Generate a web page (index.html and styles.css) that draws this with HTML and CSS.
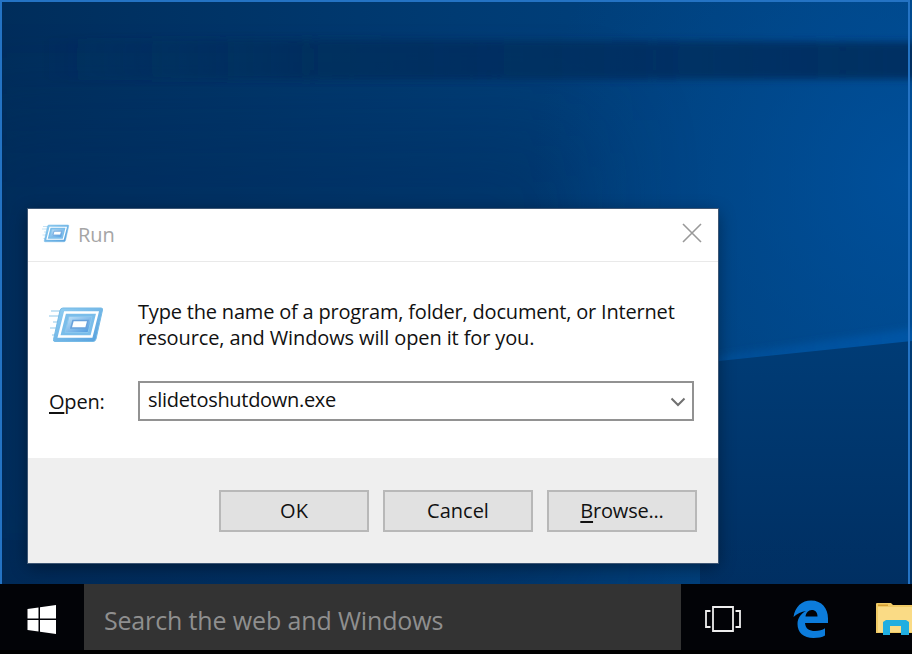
FILE: index.html
```html
<!DOCTYPE html>
<html lang="en">
<head>
    <meta charset="UTF-8">
    <meta name="viewport" content="width=device-width, initial-scale=1.0">
    <title>Run</title>
    <link rel="stylesheet" href="styles.css">
</head>
<body>
    <svg width="0" height="0" class="defs">
        <defs>
            <linearGradient id="azul" x1="0" y1="0" x2="1" y2="1">
                <stop offset="0" stop-color="#93d0f3"/>
                <stop offset="1" stop-color="#559fdc"/>
            </linearGradient>
            <linearGradient id="inner" x1="0" y1="0" x2="1" y2="1">
                <stop offset="0" stop-color="#c3e3f8"/>
                <stop offset="1" stop-color="#4a97de"/>
            </linearGradient>
            <symbol id="run-icon" viewBox="0 0 56 42">
                <path d="M2 7h12M0 12h12M4 18h7M1 24h9M3 31h5" stroke="#b5daf1" stroke-width="1.6"/>
                <path d="M14 4h38q2 0 1.500 2l-6.500 29q-.6 2.500-3 2.500H6q-2 0-1.500-2L11 6.500Q11.600 4 14 4z" fill="url(#azul)" stroke="#76bae6"/>
                <path d="M16 8.500H48.500L42.500 32.500H10z" fill="#7abdea" stroke="#fff" stroke-width="2.400"/>
                <path d="M20 12.500H43L39 28.500H16z" fill="url(#inner)" stroke="#8ac6ee" stroke-width="1"/>
                <path d="M24 16.500H39l-2 7.500H22z" fill="#fff" stroke="#6aa2dc" stroke-width="1.600"/>
            </symbol>
        </defs>
    </svg>

    <div class="desktop">
        <svg class="wallpaper" viewBox="0 0 912 584" preserveAspectRatio="none">
            <defs>
                <linearGradient id="base" x1="0" y1="0" x2="1" y2="0">
                    <stop offset="0" stop-color="#002d5b"/>
                    <stop offset=".5" stop-color="#003b73"/>
                    <stop offset="1" stop-color="#004788"/>
                </linearGradient>
                <radialGradient id="glow" gradientUnits="userSpaceOnUse" cx="912" cy="180" r="380">
                    <stop offset="0" stop-color="#0052a0" stop-opacity=".8"/>
                    <stop offset="1" stop-color="#004a91" stop-opacity="0"/>
                </radialGradient>
                <linearGradient id="band" x1="0" y1="0" x2="1" y2="0">
                    <stop offset="0" stop-color="#002a57" stop-opacity="0"/>
                    <stop offset=".3" stop-color="#002a57" stop-opacity=".6"/>
                    <stop offset="1" stop-color="#002f62"/>
                </linearGradient>
                <linearGradient id="floor" x1="0" y1="0" x2="0" y2="1">
                    <stop offset="0" stop-color="#003c76"/>
                    <stop offset="1" stop-color="#002f62"/>
                </linearGradient>
                <linearGradient id="bottom" x1="0" y1="0" x2="1" y2="0">
                    <stop offset="0" stop-color="#002855"/>
                    <stop offset="1" stop-color="#003063" stop-opacity="0"/>
                </linearGradient>
                <linearGradient id="ray" x1="0" y1="0" x2="1" y2="0">
                    <stop offset="0" stop-color="#0056a8" stop-opacity=".2"/>
                    <stop offset="1" stop-color="#0058ab" stop-opacity=".8"/>
                </linearGradient>
                <filter id="soft" x="-10%" y="-20%" width="120%" height="140%"><feGaussianBlur stdDeviation="3.500"/></filter>
                <filter id="blur" x="-20%" y="-20%" width="140%" height="140%"><feGaussianBlur stdDeviation="50"/></filter>
            </defs>
            <rect width="912" height="584" fill="url(#base)"/>
            <path d="M-60 120H600L560 600H-60z" fill="#002c5b" opacity=".4" filter="url(#blur)"/>
            <rect width="912" height="584" fill="url(#glow)"/>
            <path d="M40 38 940 42V79L40 80z" fill="url(#band)" filter="url(#soft)"/>
            <path d="M600 372 930 326V346L600 384z" fill="url(#ray)" filter="url(#soft)"/>
            <path d="M700 363 912 341V584H700z" fill="url(#floor)"/>
            <path d="M0 540H912V584H0z" fill="url(#bottom)" opacity=".7"/>
        </svg>

        <div class="window">
            <div class="titlebar">
                <svg class="title-icon"><use href="#run-icon"/></svg>
                <span class="title">Run</span>
                <svg class="close" viewBox="0 0 20 20"><path d="M1 1l18 18M19 1L1 19"/></svg>
            </div>
            <div class="content">
                <svg class="big-icon"><use href="#run-icon"/></svg>
                <p class="message"><span class="line1">Type the name of a program, folder, document, or Internet</span><br><span class="line2">resource, and Windows will open it for you.</span></p>
                <label class="open-label" for="open"><u>O</u>pen:</label>
                <div class="combo">
                    <span id="open">slidetoshutdown.exe</span>
                    <svg class="arrow" viewBox="0 0 16 10"><path d="M1.500 1.500 8 8l6.500-6.500"/></svg>
                </div>
            </div>
            <div class="buttons">
                <button>OK</button>
                <button>Cancel</button>
                <button class="browse"><u>B</u>rowse...</button>
            </div>
        </div>
    </div>

    <div class="taskbar">
        <div class="start">
            <svg width="30" height="30" viewBox="0 0 30 30" fill="#fff">
                <path d="M.5 4 11.500 2.500V13.500H.5zM13 2.300 29 0V13.500H13zM.5 15H11.500V26.500L.5 25zM13 15H29V29L13 26.700z"/>
            </svg>
        </div>
        <div class="search"><span>Search the web and Windows</span></div>
        <div class="apps">
            <svg class="taskview" viewBox="0 0 36 26" fill="none" stroke="#eee" stroke-width="1.800">
                <path d="M8 1H28V25H8zM5.500 5H1V21H5.500M30.500 5H35V21H30.500"/>
            </svg>
            <svg class="edge" viewBox="0 0 36 38">
                <path fill="#0c7cdb" d="M.5 17C2 6.500 9 .5 18 .5 29 .5 35 8.500 35 18.500V23H12C12.500 29 16.500 31 22 31 26 31 29.500 30 32 28.300V35.500C29 37.300 25 38 20.500 38 10.500 38 4.500 32.500 4.500 24 4.500 18 8 13.500 13 11 8.500 11.500 4 13.500.5 17zM12.500 16.500H24.500C24.500 12.500 22.500 10 18.800 10 15.200 10 13 13 12.500 16.500z"/>
            </svg>
            <svg class="folder" viewBox="0 0 36 34">
                <path d="M0 2Q0 1 1 1H15L17 3H36V31H0z" fill="#f0ca65"/>
                <path d="M2 5H36V30H2z" fill="#fadb85"/>
                <path d="M2 2.500H12V4H2z" fill="#d69f32"/>
                <path d="M7 33V20L10 18H30L33 20V33H25V24H14V33z" fill="#21aee0"/>
            </svg>
        </div>
    </div>
</body>
</html>
```

FILE: styles.css
```css
body {
    margin: 0;
    width: 912px;
    height: 654px;
    overflow: hidden;
    background: #000;
    font-family: "Open Sans", "Noto Sans", sans-serif;
    font-size: 20px;
    color: #111;
}

.defs {
    position: absolute;
}

.desktop {
    position: relative;
    height: 584px;
    overflow: hidden;
}

.desktop::after {
    content: "";
    position: absolute;
    top: 0;
    left: 0;
    right: 2px;
    bottom: 0;
    border: 2px solid #2473c4;
    border-bottom: none;
}

.wallpaper {
    display: block;
    width: 912px;
    height: 584px;
}

.window {
    position: absolute;
    left: 28px;
    top: 209px;
    width: 690px;
    height: 354px;
    display: flex;
    flex-direction: column;
    background: #fff;
    outline: 1px solid #3d5674;
    box-shadow: 0 4px 16px rgba(0, 0, 0, 0.4);
}

.titlebar {
    display: flex;
    align-items: center;
    height: 53px;
    padding: 0 16px 1px 14px;
    box-sizing: border-box;
    border-bottom: 1px solid #e9e9e9;
}

.title-icon {
    width: 28px;
    height: 21px;
    margin-top: -2px;
}

.title {
    flex: 1;
    margin-left: 8px;
    color: #a5a5a5;
}

.close {
    width: 20px;
    height: 20px;
    margin-top: -3px;
    stroke: #999;
    stroke-width: 1.6;
}

.content {
    display: grid;
    grid-template-columns: 89px 556px;
    grid-template-rows: 82px 40px;
    padding: 37px 0 37px 21px;
}

.big-icon {
    width: 56px;
    height: 42px;
    margin-top: 5px;
}

.message {
    margin: 0;
    line-height: 26px;
    white-space: nowrap;
}

.line1 {
    letter-spacing: -0.19px;
}

.line2 {
    letter-spacing: -0.12px;
}

.open-label {
    line-height: 41px;
    letter-spacing: -0.2px;
}

u {
    text-underline-offset: 3px;
    text-decoration-thickness: 1.5px;
}

.combo {
    display: flex;
    align-items: center;
    justify-content: space-between;
    box-sizing: border-box;
    padding: 0 6px 3px 8px;
    border: 2px solid #929292;
    letter-spacing: -0.3px;
}

.arrow {
    width: 16px;
    height: 10px;
    margin-top: 4px;
    fill: none;
    stroke: #707070;
    stroke-width: 2;
}

.buttons {
    flex: 1;
    display: flex;
    justify-content: flex-end;
    align-items: flex-start;
    gap: 14px;
    padding: 32px 21px 0 0;
    background: #efefef;
}

button {
    width: 150px;
    height: 42px;
    padding: 0 0 2px;
    border: 2px solid #b8b8b8;
    background: #e1e1e1;
    font: inherit;
    color: #111;
}

.browse {
    letter-spacing: -0.2px;
}

.taskbar {
    display: flex;
    height: 66px;
    background: #020307;
}

.start {
    display: flex;
    align-items: center;
    width: 57px;
    padding: 5px 0 0 27px;
}

.search {
    display: flex;
    align-items: center;
    width: 578px;
    padding: 5px 0 0 20px;
    background: #333;
    color: #8f8f8f;
    font-size: 25px;
    letter-spacing: -0.14px;
}

.apps {
    display: flex;
    align-items: center;
    flex: none;
    padding: 4px 0 0 24px;
}

.taskview {
    width: 36px;
    height: 26px;
}

.edge {
    width: 36px;
    height: 38px;
    margin-left: 52px;
}

.folder {
    width: 36px;
    height: 34px;
    margin-left: 47px;
}
```
